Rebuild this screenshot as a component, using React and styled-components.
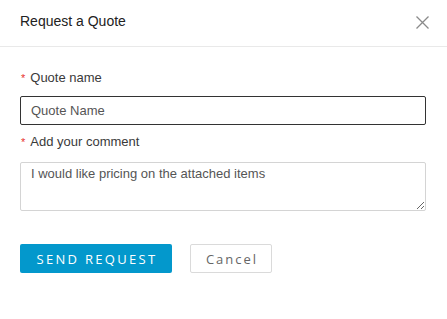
import styled, { createGlobalStyle } from 'styled-components'

const GlobalStyle = createGlobalStyle`
  body {
    margin: 0;
    background: #fff;
    font-family: 'Liberation Sans', Arial, sans-serif;
  }
`

export default function App() {
  return (
    <>
      <GlobalStyle />
      <Modal>
        <Header>
          <Title>Request a Quote</Title>
          <CloseButton aria-label="Close">
            <svg width="13" height="13" viewBox="0 0 13 13">
              <path d="M0.5 0.5L12.5 12.5M12.5 0.5L0.5 12.5" stroke="#8a8a8a" strokeWidth="1.3" />
            </svg>
          </CloseButton>
        </Header>
        <Body>
          <Field $gap={10}>
            <Label>
              <Required>*</Required>Quote name
            </Label>
            <Input defaultValue="Quote Name" />
          </Field>
          <Field $gap={12}>
            <Label>
              <Required>*</Required>Add your comment
            </Label>
            <TextArea defaultValue="I would like pricing on the attached items" />
          </Field>
          <Actions>
            <PrimaryButton>SEND REQUEST</PrimaryButton>
            <SecondaryButton>Cancel</SecondaryButton>
          </Actions>
        </Body>
      </Modal>
    </>
  )
}

const Modal = styled.div`
  width: 447px;
  height: 319px;
  background: #fff;
`

const Header = styled.div`
  height: 47px;
  padding: 0 18px 0 20px;
  border-bottom: 1px solid #e9e9e9;
  display: flex;
  align-items: center;
  justify-content: space-between;
  box-sizing: border-box;
`

const Title = styled.span`
  font-size: 14px;
  color: #222;
  margin-top: -5px;
`

const CloseButton = styled.button`
  border: none;
  background: none;
  padding: 0;
  display: flex;
  cursor: pointer;
  margin-top: -2px;
`

const Body = styled.div`
  padding: 23px 21px 0 20px;
  display: flex;
  flex-direction: column;
`

const Field = styled.div`
  display: flex;
  flex-direction: column;
  gap: ${p => p.$gap}px;
  margin-bottom: 9px;
`

const Label = styled.label`
  font-size: 13px;
  line-height: 16px;
  color: #3a3a3a;
`

const Required = styled.span`
  color: #e8332f;
  font-size: 11px;
  margin: 0 5px 0 1px;
`

const Input = styled.input`
  box-sizing: border-box;
  height: 29px;
  width: 100%;
  border: 1px solid #333;
  border-radius: 2px;
  padding: 0 10px;
  font-family: 'Liberation Sans', Arial, sans-serif;
  font-size: 13px;
  color: #555;
  outline: none;
`

const TextArea = styled.textarea`
  box-sizing: border-box;
  height: 49px;
  width: 100%;
  border: 1px solid #d4d4d4;
  border-radius: 2px;
  padding: 3px 10px;
  font-family: 'Liberation Sans', Arial, sans-serif;
  font-size: 13px;
  line-height: 16px;
  color: #555;
  outline: none;
  resize: vertical;
`

const Actions = styled.div`
  display: flex;
  gap: 18px;
  margin-top: 24px;
`

const BaseButton = styled.button`
  box-sizing: border-box;
  height: 29px;
  border-radius: 2px;
  font-family: 'Open Sans', 'DejaVu Sans', sans-serif;
  font-size: 13px;
  cursor: pointer;
`

const PrimaryButton = styled(BaseButton)`
  width: 152px;
  background: #0398cc;
  border: none;
  color: #fff;
  letter-spacing: 2.3px;
  padding: 0 0 0 2px;
`

const SecondaryButton = styled(BaseButton)`
  width: 82px;
  background: #fff;
  border: 1px solid #dadada;
  color: #666;
  letter-spacing: 2px;
  padding: 0 0 0 2px;
`
